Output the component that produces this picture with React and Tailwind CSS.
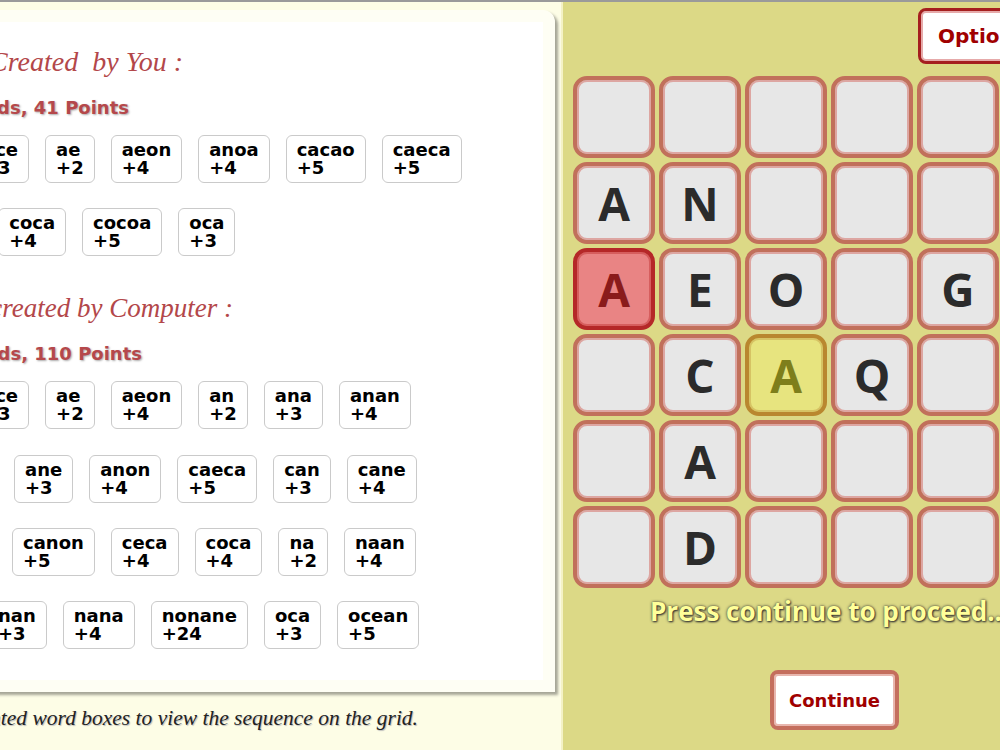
import React from "react";

const youRows = [
  { offset: "ml-0", words: [["ace", 3], ["ae", 2], ["aeon", 4], ["anoa", 4], ["cacao", 5], ["caeca", 5]] },
  { offset: "ml-[-72px]", words: [["canoe", 6], ["coca", 4], ["cocoa", 5], ["oca", 3]] },
];

const computerRows = [
  { offset: "ml-0", words: [["ace", 3], ["ae", 2], ["aeon", 4], ["an", 2], ["ana", 3], ["anan", 4]] },
  { offset: "ml-[42px]", words: [["ane", 3], ["anon", 4], ["caeca", 5], ["can", 3], ["cane", 4]] },
  { offset: "ml-[40px]", words: [["canon", 5], ["ceca", 4], ["coca", 4], ["na", 2], ["naan", 4]] },
  { offset: "ml-[15px]", words: [["nan", 3], ["nana", 4], ["nonane", 24], ["oca", 3], ["ocean", 5]] },
];

const grid = [
  ["", "", "", "", ""],
  ["A", "N", "", "", ""],
  ["A", "E", "O", "", "G"],
  ["", "C", "A", "Q", ""],
  ["", "A", "", "", ""],
  ["", "D", "", "", ""],
];

const serif = { fontFamily: '"Liberation Serif", serif' };
const verdana = { fontFamily: '"DejaVu Sans", Verdana, sans-serif' };

function WordBox({ word, score }) {
  return (
    <div
      className="h-[48px] shrink-0 flex flex-col justify-center px-[10px] bg-white border-[1.5px] border-[#cacaca] rounded-[6px] text-[18px] leading-[18px] font-bold text-black"
      style={verdana}
    >
      <span>{word}</span>
      <span>+{score}</span>
    </div>
  );
}

function WordRow({ row, className }) {
  return (
    <div className={`flex gap-4 ${row.offset} ${className}`}>
      {row.words.map(([w, s], i) => (
        <WordBox key={i} word={w} score={s} />
      ))}
    </div>
  );
}

function Tile({ letter, r, c }) {
  let tone = "bg-[#e7e7e7] border-[#c1705b] shadow-[inset_0_0_0_2px_#dda6a2] text-[#2b2b2b]";
  if (r === 2 && c === 0) tone = "bg-[#e98484] border-[#b52828] shadow-[inset_0_0_0_2px_#d65e5e] text-[#8a1b1b]";
  if (r === 3 && c === 2) tone = "bg-[#e7e47f] border-[#b9872f] shadow-[inset_0_0_0_2px_#d6c364] text-[#7e7e1b]";
  return (
    <div
      className={`w-[82px] h-[82px] rounded-[14px] border-[4px] flex items-center justify-center text-[46px] font-bold ${tone}`}
      style={{ fontFamily: '"Open Sans", sans-serif' }}
    >
      {letter}
    </div>
  );
}

export default function App() {
  return (
    <div className="w-[1000px] h-[750px] overflow-hidden flex border-t-2 border-[#9a9a9a] bg-[#fdfde6]">
      {/* left side: word lists */}
      <div className="w-[561px] shrink-0 flex flex-col">
        <div className="mt-[8px] ml-[-40px] w-[595px] h-[682px] shrink-0 bg-white border-[12px] border-[#fefef4] rounded-tr-[12px] shadow-[3px_3px_3px_rgba(0,0,0,0.35)] flex flex-col">
          <div className="mt-[23px] w-[211px] flex justify-end">
            <span className="shrink-0 whitespace-nowrap italic text-[28px] leading-[34px] text-[#b3474a]" style={serif}>
              Words Created&nbsp; by You :
            </span>
          </div>
          <div className="mt-[18px] w-[157px] flex justify-end">
            <span
              className="shrink-0 whitespace-nowrap font-bold text-[18px] leading-[22px] text-[#b5484b] [text-shadow:1px_1px_2px_#aaa]"
              style={verdana}
            >
              10 Words, 41 Points
            </span>
          </div>
          <WordRow row={youRows[0]} className="mt-[16px]" />
          <WordRow row={youRows[1]} className="mt-[25px]" />

          <div className="mt-[35px] w-[261px] flex justify-end">
            <span className="shrink-0 whitespace-nowrap italic text-[27px] leading-[34px] text-[#b3474a]" style={serif}>
              Words created by Computer :
            </span>
          </div>
          <div className="mt-[18px] w-[170px] flex justify-end">
            <span
              className="shrink-0 whitespace-nowrap font-bold text-[18px] leading-[22px] text-[#b5484b] [text-shadow:1px_1px_2px_#aaa]"
              style={verdana}
            >
              21 Words, 110 Points
            </span>
          </div>
          <WordRow row={computerRows[0]} className="mt-[16px]" />
          <WordRow row={computerRows[1]} className="mt-[26px]" />
          <WordRow row={computerRows[2]} className="mt-[25px]" />
          <WordRow row={computerRows[3]} className="mt-[25px]" />
        </div>
        <div className="mt-[13px] w-[418px] flex justify-end">
          <span
            className="shrink-0 whitespace-nowrap italic text-[21.5px] leading-[26px] text-[#222] [text-shadow:1px_1px_1px_#bbb]"
            style={serif}
          >
            Click on the highlighted word boxes to view the sequence on the grid.
          </span>
        </div>
      </div>

      {/* right side: grid */}
      <div className="flex-1 bg-[#dcd986] border-l-2 border-[#f4f2c6] flex flex-col">
        <div
          className="mt-[6px] ml-[355px] w-[110px] h-[56px] shrink-0 bg-white border-[3px] border-[#a51f1f] shadow-[inset_0_0_0_2px_#e6aaaa] rounded-[8px] flex items-center pl-[17px] text-[20px] font-bold text-[#a00000]"
          style={verdana}
        >
          Options
        </div>
        <div className="mt-[12px] ml-[10px] grid grid-cols-[repeat(5,82px)] gap-[4px]">
          {grid.map((row, r) =>
            row.map((l, c) => <Tile key={`${r}-${c}`} letter={l} r={r} c={c} />)
          )}
        </div>
        <div
          className="mt-[6px] ml-[87px] whitespace-nowrap text-[26px] leading-[34px] font-bold text-[#ffff99] [text-shadow:0_0_3px_#333,1px_1px_2px_#333]"
          style={{ fontFamily: '"Open Sans", sans-serif' }}
        >
          Press continue to proceed...
        </div>
        <div
          className="mt-[42px] ml-[207px] w-[129px] h-[60px] shrink-0 bg-white border-[4px] border-[#c46e5d] shadow-[inset_0_0_0_2px_#e8b6ae] rounded-[8px] flex items-center justify-center text-[18px] font-bold text-[#a00000]"
          style={verdana}
        >
          Continue
        </div>
      </div>
    </div>
  );
}
